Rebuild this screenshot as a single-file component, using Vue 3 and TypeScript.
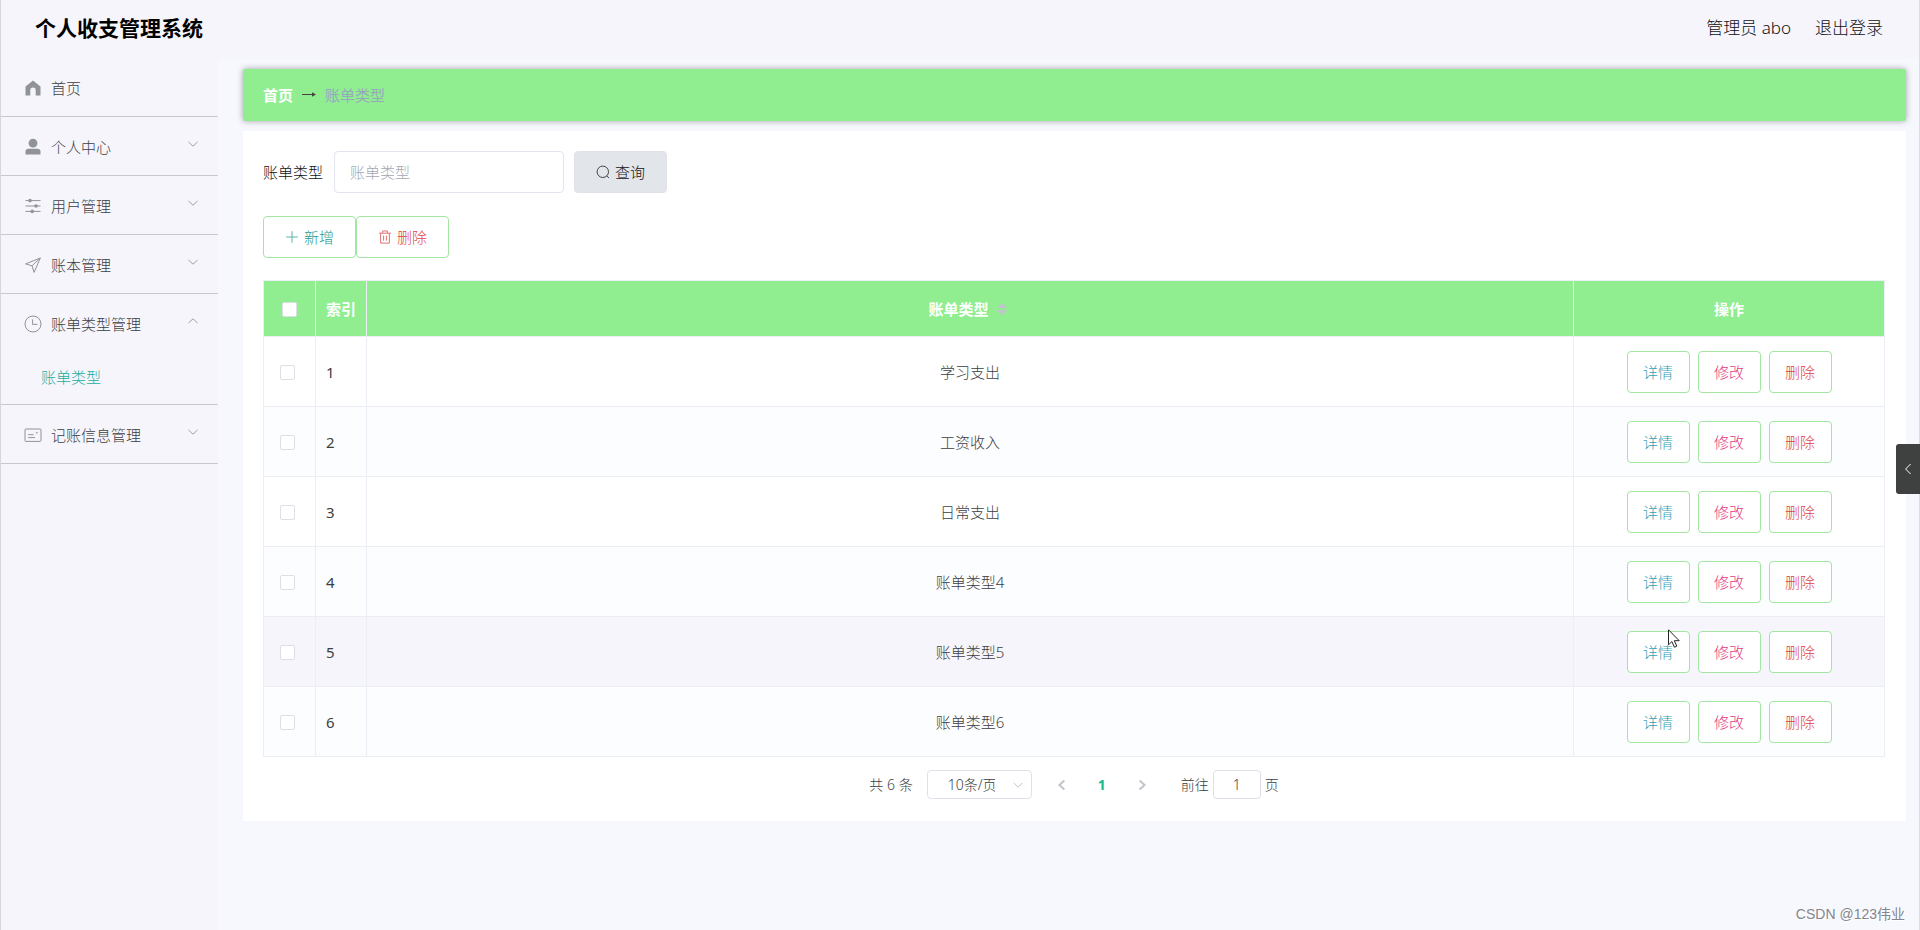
<script setup lang="ts">
import { ref } from 'vue'

type IconName = 'home' | 'user' | 'sliders' | 'plane' | 'clock' | 'card'

interface MenuItem {
  label: string
  icon: IconName
  expandable: boolean
  children: string[]
}

interface Row {
  id: number
  name: string
  checked: boolean
}

const menu: MenuItem[] = [
  { label: '首页', icon: 'home', expandable: false, children: [] },
  { label: '个人中心', icon: 'user', expandable: true, children: [] },
  { label: '用户管理', icon: 'sliders', expandable: true, children: [] },
  { label: '账本管理', icon: 'plane', expandable: true, children: [] },
  { label: '账单类型管理', icon: 'clock', expandable: true, children: ['账单类型'] },
  { label: '记账信息管理', icon: 'card', expandable: true, children: [] },
]

const rows = ref<Row[]>(
  ['学习支出', '工资收入', '日常支出', '账单类型4', '账单类型5', '账单类型6'].map((name, i) => ({
    id: i + 1,
    name,
    checked: false,
  })),
)

const activeRow = ref(5)
const keyword = ref('')
const pageSize = ref('10')
const jumpPage = ref('1')
const allChecked = ref(false)

function toggleAll(): void {
  rows.value.forEach((row) => (row.checked = allChecked.value))
}
</script>

<template>
  <div class="app">
    <header class="topbar">
      <h1 class="title">个人收支管理系统</h1>
      <div class="account">
        <span>管理员 abo</span>
        <a href="#" class="logout">退出登录</a>
      </div>
    </header>

    <div class="body">
      <nav class="sidebar" aria-label="主菜单">
        <ul class="menu">
          <li v-for="item in menu" :key="item.label" class="menu-group">
            <button type="button" class="menu-item">
              <svg class="menu-icon" viewBox="0 0 18 18" aria-hidden="true">
                <path v-if="item.icon === 'home'" class="solid" d="M9 1.5 1.5 7.6V16.5H6.3V11.2a2.7 2.7 0 0 1 5.4 0V16.5h4.8V7.6Z" />
                <template v-else-if="item.icon === 'user'">
                  <circle class="solid" cx="9" cy="5.2" r="4.4" />
                  <path class="solid" d="M1.5 16.5v-3a3 3 0 0 1 3-2.8h9a3 3 0 0 1 3 2.8v3Z" />
                </template>
                <template v-else-if="item.icon === 'sliders'">
                  <path d="M1.5 3.6h15M1.5 9h15M1.5 14.4h15" />
                  <circle class="solid" cx="6" cy="3.6" r="1.8" />
                  <circle class="solid" cx="12" cy="9" r="1.8" />
                  <circle class="solid" cx="8.2" cy="14.4" r="1.8" />
                </template>
                <path v-else-if="item.icon === 'plane'" d="M16.3 2 1.6 7.9l6.4 1.9 2.1 6.6ZM16.3 2 8 9.8" />
                <template v-else-if="item.icon === 'clock'">
                  <circle cx="9" cy="9" r="8" />
                  <path d="M8.6 4.4v5h4.8" />
                </template>
                <template v-else>
                  <rect x="1" y="3" width="16" height="12.4" rx="1" />
                  <path d="M4.2 8.7h5.4M4.2 11.6h6.8M11.8 6.8h2" />
                </template>
              </svg>
              <span class="menu-label">{{ item.label }}</span>
              <svg v-if="item.expandable" class="chevron" viewBox="0 0 12 12" aria-hidden="true">
                <path :d="item.children.length ? 'M1.5 8 6 3.8 10.5 8' : 'M1.5 4 6 8.2 10.5 4'" />
              </svg>
            </button>
            <a v-for="child in item.children" :key="child" href="#" class="submenu-item">{{ child }}</a>
          </li>
        </ul>
      </nav>

      <main class="main">
        <nav class="crumbs" aria-label="面包屑">
          <a href="#" class="crumb-home">首页</a>
          <svg class="crumb-arrow" viewBox="0 0 14 8" aria-hidden="true"><path d="M0 3.5h12" /><path class="head" d="M10 1.2 14 3.5l-4 2.3Z" /></svg>
          <span class="crumb-current">账单类型</span>
        </nav>

        <section class="panel">
          <form class="search" @submit.prevent>
            <label for="keyword" class="search-label">账单类型</label>
            <input id="keyword" v-model="keyword" class="search-input" type="text" placeholder="账单类型" />
            <button type="submit" class="btn query">
              <svg class="btn-icon" viewBox="0 0 14 14" aria-hidden="true"><circle cx="6.8" cy="6.8" r="5.7" /><path d="m10.8 10.8 2.2 2.2" /></svg>
              <span>查询</span>
            </button>
          </form>

          <div class="tools">
            <button type="button" class="btn outline add">
              <svg class="btn-icon" viewBox="0 0 14 14" aria-hidden="true"><path d="M7 1.2v11.6M1.2 7h11.6" /></svg>
              <span>新增</span>
            </button>
            <button type="button" class="btn outline remove">
              <svg class="btn-icon" viewBox="0 0 14 14" aria-hidden="true"><path d="M1 3.2h12M4.6 3V1h4.8v2M2.6 3.2v9.9h8.8V3.2M5.6 5.6v5M8.4 5.6v5" /></svg>
              <span>删除</span>
            </button>
          </div>

          <table class="grid">
            <colgroup>
              <col class="col-check" />
              <col class="col-index" />
              <col />
              <col class="col-actions" />
            </colgroup>
            <thead>
              <tr>
                <th class="check"><input v-model="allChecked" type="checkbox" class="box" aria-label="全选" @change="toggleAll" /></th>
                <th class="index">索引</th>
                <th>
                  <span class="sortable">
                    账单类型
                    <svg class="sort" viewBox="0 0 12 14" aria-hidden="true"><path d="M6 1 11.5 6H.5ZM.5 8h11L6 13Z" /></svg>
                  </span>
                </th>
                <th>操作</th>
              </tr>
            </thead>
            <tbody>
              <tr v-for="row in rows" :key="row.id" :class="{ active: row.id === activeRow }">
                <td class="check"><input v-model="row.checked" type="checkbox" class="box" :aria-label="'选择' + row.name" /></td>
                <td class="index">{{ row.id }}</td>
                <td>{{ row.name }}</td>
                <td>
                  <div class="actions">
                    <button type="button" class="btn outline small detail">详情</button>
                    <button type="button" class="btn outline small edit">修改</button>
                    <button type="button" class="btn outline small remove">删除</button>
                    <svg v-if="row.id === activeRow" class="pointer" viewBox="0 0 12 19" aria-hidden="true">
                      <path d="M.5.8v15l3.4-3.2 2.5 5.6 2.4-1-2.5-5.5h4.9Z" />
                    </svg>
                  </div>
                </td>
              </tr>
            </tbody>
          </table>

          <div class="pager">
            <span class="total">共 6 条</span>
            <span class="size">
              <select v-model="pageSize" class="size-select" aria-label="每页条数">
                <option value="10">10条/页</option>
                <option value="20">20条/页</option>
              </select>
              <svg class="size-arrow" viewBox="0 0 12 12" aria-hidden="true"><path d="M1.8 4 6 8.2 10.2 4" /></svg>
            </span>
            <button type="button" class="page-btn" aria-label="上一页">
              <svg viewBox="0 0 12 12" aria-hidden="true"><path d="M8.4 1.4 3.4 6l5 4.6" /></svg>
            </button>
            <button type="button" class="page-btn current">1</button>
            <button type="button" class="page-btn" aria-label="下一页">
              <svg viewBox="0 0 12 12" aria-hidden="true"><path d="M3.6 1.4 8.6 6l-5 4.6" /></svg>
            </button>
            <label class="jump">前往<input v-model="jumpPage" type="text" class="jump-input" />页</label>
          </div>
        </section>
      </main>
    </div>

    <button type="button" class="drawer" aria-label="展开侧栏">
      <svg viewBox="0 0 8 12" aria-hidden="true"><path d="M6.6 1 1.6 6l5 5" /></svg>
    </button>
    <div class="watermark">CSDN @123伟业</div>
  </div>
</template>

<style>
body {
  margin: 0;
}
</style>

<style scoped>
.app {
  position: relative;
  box-sizing: border-box;
  min-height: 100vh;
  display: flex;
  flex-direction: column;
  border-left: 1px solid #d6d6dc;
  border-right: 1px solid #dcdce4;
  background: #f7f8fd;
  color: #3c3e42;
  font-family: "Noto Sans", "Noto Sans CJK SC", sans-serif;
  font-size: 15px;
  font-weight: 300;
  line-height: 22px;
}

.app *,
.app *::before {
  box-sizing: border-box;
}

button,
input,
select {
  margin: 0;
  font: inherit;
  color: inherit;
}

button {
  cursor: pointer;
}

a {
  text-decoration: none;
}

svg {
  display: block;
  flex: none;
  fill: none;
  stroke: currentColor;
}

.topbar {
  display: flex;
  align-items: center;
  justify-content: space-between;
  height: 59px;
  padding: 0 36px 4px 34px;
  background: #f5f5fb;
}

.title {
  margin: 0;
  color: #000;
  font-size: 21px;
  line-height: 28px;
}

.account {
  display: flex;
  gap: 24px;
  color: #111;
  font-size: 17px;
}

.logout {
  color: inherit;
}

.body {
  flex: 1;
  display: flex;
}

.sidebar {
  flex: none;
  width: 217px;
  background: #f5f5fb;
}

.menu {
  margin: 0;
  padding: 0;
  list-style: none;
}

.menu-group {
  border-bottom: 1px solid #c8c8ce;
}

.menu-item {
  display: flex;
  align-items: center;
  width: 100%;
  height: 58px;
  padding: 2px 19px 0 23px;
  border: 0;
  background: none;
  text-align: left;
}

.menu-group:first-child .menu-item {
  height: 57px;
  padding-top: 0;
}

.menu-icon {
  width: 18px;
  height: 18px;
  margin-right: 9px;
  color: #909399;
}

.menu-label {
  flex: 1;
}

.chevron {
  width: 12px;
  height: 12px;
  margin-bottom: 6px;
  color: #a0a2a8;
}

.solid {
  fill: currentColor;
  stroke: none;
}

.submenu-item {
  display: block;
  height: 52px;
  padding-left: 40px;
  color: #1fae9f;
  line-height: 50px;
}

.main {
  flex: 1;
  min-width: 0;
  padding: 10px 13px 0 25px;
}

.crumbs {
  display: flex;
  align-items: center;
  height: 52px;
  margin-bottom: 10px;
  padding: 0 20px;
  border-radius: 2px;
  background: #90ee90;
  box-shadow: 0 0 6px rgba(0, 0, 0, 0.35);
}

.crumb-home {
  color: #fff;
  font-weight: 700;
}

.crumb-arrow {
  width: 14px;
  height: 8px;
  margin: 0 9px;
  color: #444;
}

.crumb-arrow .head {
  fill: currentColor;
  stroke: none;
}

.crumb-current {
  color: #97a8be;
  font-weight: 400;
}

.panel {
  padding: 20px 21px 21px 20px;
  background: #fff;
}

.search {
  display: flex;
  align-items: center;
  margin-bottom: 23px;
}

.search-label {
  margin-right: 11px;
  color: #111;
}

.search-input {
  width: 230px;
  height: 42px;
  margin-right: 10px;
  padding: 0 15px;
  border: 1px solid #e2e4ee;
  border-radius: 4px;
  background: #fff;
  outline: none;
}

.search-input::placeholder {
  color: #a4a8b2;
}

.btn {
  display: flex;
  align-items: center;
  justify-content: center;
  gap: 5px;
  width: 93px;
  height: 42px;
  padding: 0;
  border: 1px solid #dfe2e8;
  border-radius: 4px;
  background: #fff;
}

.btn-icon {
  width: 14px;
  height: 14px;
  opacity: 0.75;
}

.query {
  background: #e2e5ea;
  color: #111;
}

.outline {
  border-color: #a2e6a2;
}

.tools {
  display: flex;
  margin-bottom: 22px;
}

.add {
  color: #229c90;
}

.remove {
  color: #dc4444;
}

.small {
  width: 63px;
}

.detail {
  color: #309fb6;
}

.edit {
  color: #e23880;
}

.grid {
  width: 100%;
  table-layout: fixed;
  border: 1px solid #ebeef5;
  border-bottom: 0;
  border-spacing: 0;
}

.col-check {
  width: 52px;
}

.col-index {
  width: 51px;
}

.col-actions {
  width: 310px;
}

th,
td {
  padding: 0;
  border-right: 1px solid #ebeef5;
  border-bottom: 1px solid #ebeef5;
  text-align: center;
}

th:last-child,
td:last-child {
  border-right: 0;
}

th {
  height: 56px;
  background: #90ee90;
  color: #fff;
}

td {
  height: 70px;
}

tbody tr:nth-child(even) td {
  background: #fcfdff;
}

tbody tr.active td {
  background: #f5f5fb;
}

.grid .index {
  padding-left: 10px;
  text-align: left;
}

.grid td.index {
  font-weight: 400;
}

.grid .check {
  padding-top: 2px;
}

.grid td.check {
  padding-right: 5px;
}

.box {
  appearance: none;
  display: block;
  width: 15px;
  height: 15px;
  margin: 0 auto;
  border: 1px solid #dcdfe6;
  border-radius: 2px;
  background: #fff;
}

.box:checked {
  background: #54b8ae;
}

.sortable {
  display: inline-flex;
  align-items: center;
  gap: 7px;
  padding-right: 4px;
}

.sort {
  width: 12px;
  height: 14px;
  fill: #c0c4cc;
  stroke: none;
}

.actions {
  position: relative;
  display: flex;
  justify-content: center;
  gap: 8px;
}

.pointer {
  position: absolute;
  left: 94px;
  top: -2px;
  width: 12px;
  height: 19px;
  fill: #fff;
  stroke: #222;
}

.pager {
  display: flex;
  align-items: center;
  justify-content: center;
  margin-top: 13px;
  padding-bottom: 1px;
  font-size: 14px;
}

.total {
  margin-right: 14px;
}

.size {
  position: relative;
  margin-right: 15px;
}

.size-select {
  appearance: none;
  display: block;
  width: 105px;
  height: 29px;
  padding: 0 36px 0 20px;
  border: 1px solid #e0e2ea;
  border-radius: 4px;
  background: #fff;
  text-align: center;
}

.size-arrow {
  position: absolute;
  right: 8px;
  top: 9px;
  width: 12px;
  height: 12px;
  color: #c0c4cc;
  pointer-events: none;
}

.page-btn {
  display: flex;
  align-items: center;
  justify-content: center;
  width: 30px;
  height: 29px;
  margin-right: 10px;
  padding: 0;
  border: 0;
  background: none;
  color: #c0c4cc;
}

.page-btn svg {
  width: 12px;
  height: 12px;
  stroke-width: 2;
}

.page-btn.current {
  color: #18b890;
  font-weight: 700;
}

.jump {
  display: flex;
  align-items: center;
  margin-left: 14px;
}

.jump-input {
  width: 48px;
  height: 29px;
  margin: 0 4px;
  padding: 0 3px;
  border: 1px solid #dcdfe6;
  border-radius: 4px;
  background: #fff;
  text-align: center;
}

.drawer {
  position: absolute;
  top: 444px;
  right: -1px;
  display: flex;
  align-items: center;
  justify-content: center;
  width: 24px;
  height: 50px;
  padding: 0;
  border: 0;
  border-radius: 3px 0 0 3px;
  background: #3f4040;
  color: #fff;
}

.drawer svg {
  width: 8px;
  height: 12px;
}

.watermark {
  position: absolute;
  right: 14px;
  bottom: 5px;
  color: #85858b;
  font-family: "Liberation Sans", "Noto Sans CJK SC", sans-serif;
  font-size: 14px;
  font-weight: 400;
  text-shadow: 1px 1px 0 #fff;
}
</style>
